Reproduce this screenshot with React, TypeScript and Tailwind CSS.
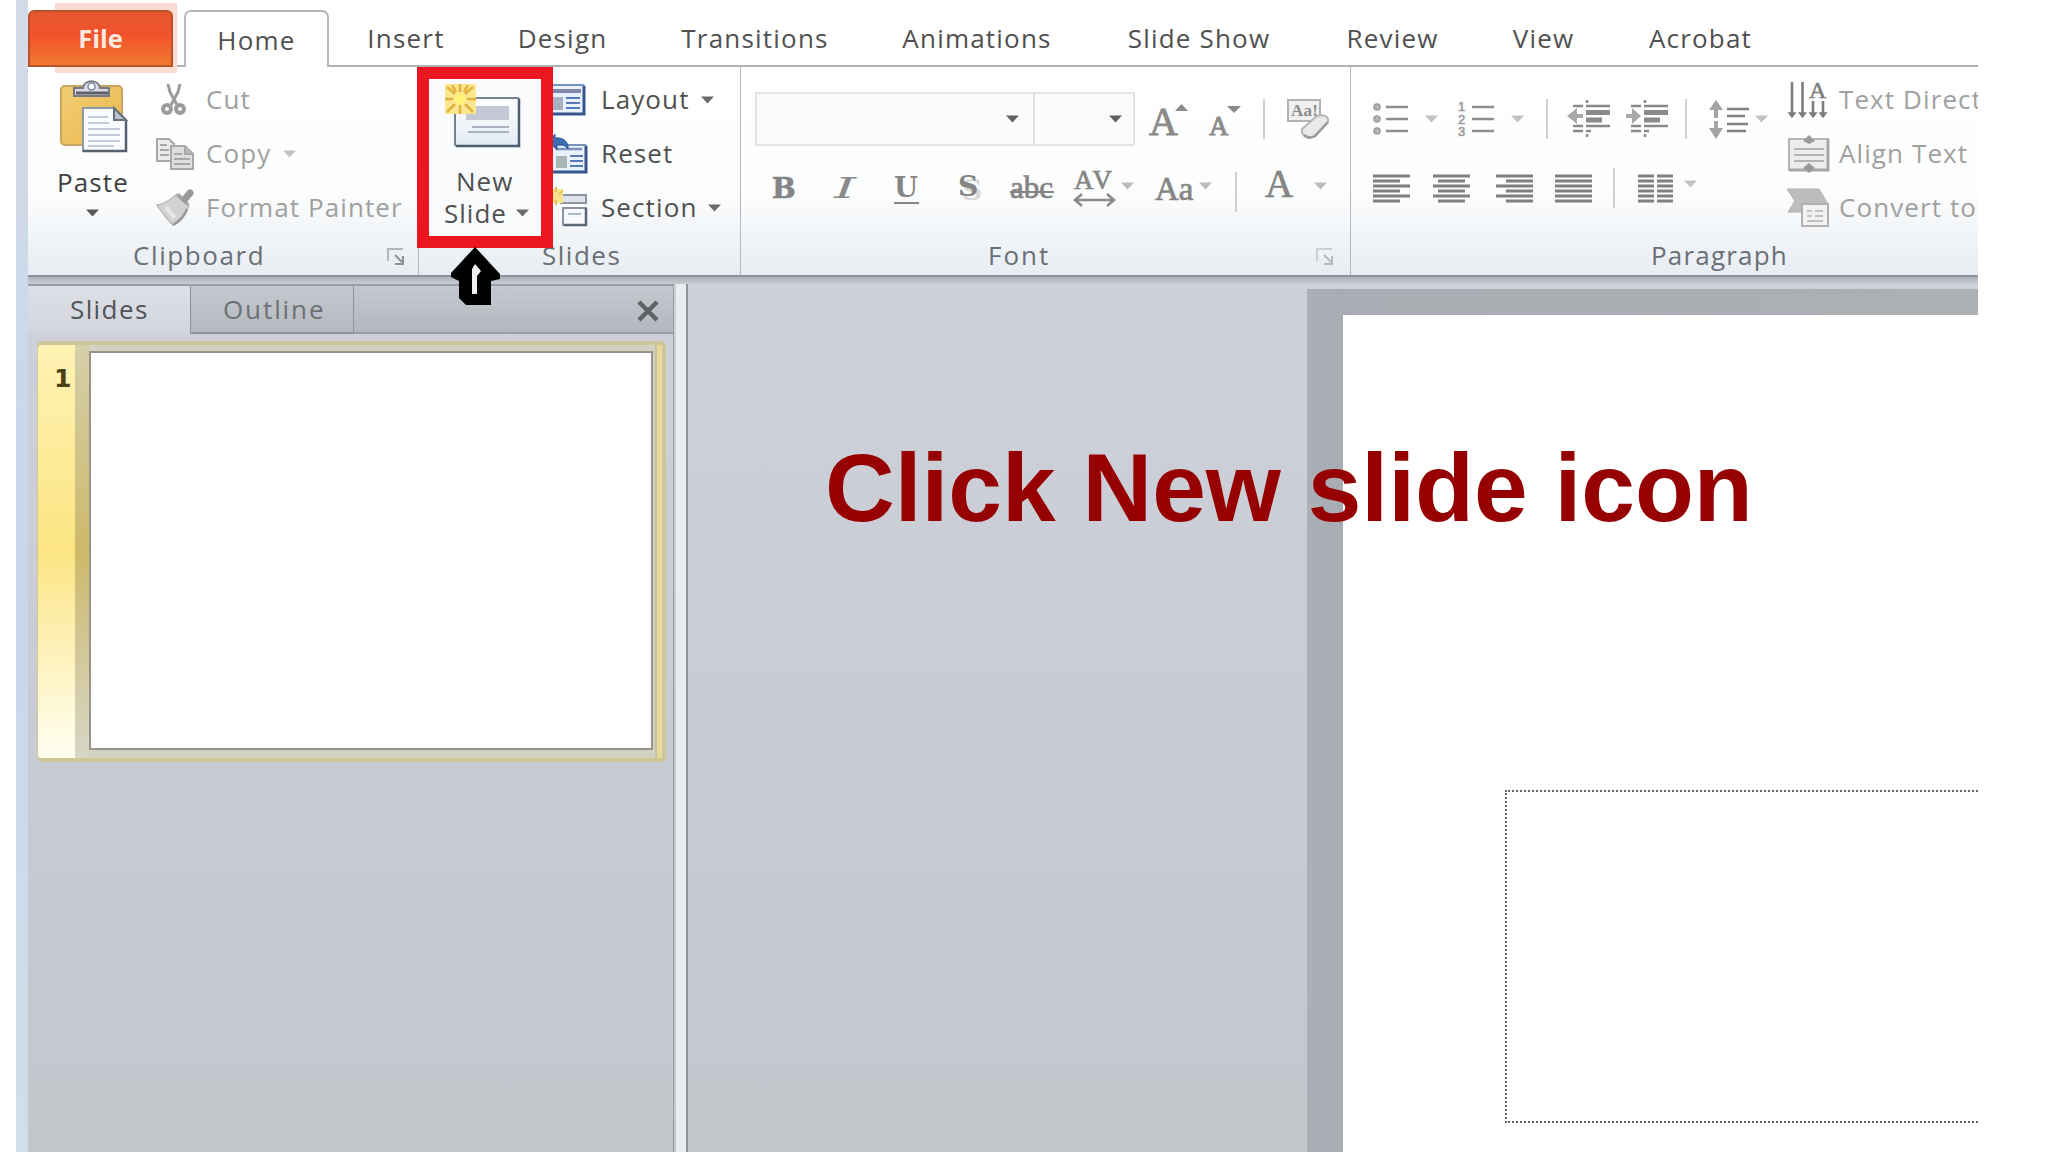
import type { ReactNode } from "react";

const tabs = [
    { name: "Insert", width: "w-[149px]" },
    { name: "Design", width: "w-[164px]" },
    { name: "Transitions", width: "w-[221px]" },
    { name: "Animations", width: "w-[223px]" },
    { name: "Slide Show", width: "w-[221px]" },
    { name: "Review", width: "w-[166px]" },
    { name: "View", width: "w-[136px]" },
    { name: "Acrobat", width: "w-[178px]" },
];

function Arrow({ className = "", color = "#6b6b6b" }: { className?: string; color?: string }) {
    return (
        <svg className={`shrink-0 ${className}`} width="13" height="8" viewBox="0 0 13 8">
            <path d="M0 0.5H13L6.5 7.5Z" fill={color} />
        </svg>
    );
}

function Launcher({ className = "", color = "#8b9096" }: { className?: string; color?: string }) {
    return (
        <svg className={className} width="20" height="18" viewBox="0 0 20 18" fill="none" stroke={color} strokeWidth="2">
            <path d="M2 13V1H17" strokeOpacity="0.6" />
            <path d="M9 7l7 7M17 8v8H9" />
        </svg>
    );
}

function Divider({ className = "" }: { className?: string }) {
    return <div className={`w-[2px] h-[40px] shrink-0 bg-[#cfd0d2] ${className}`} />;
}

function Group({ width, label, labelClass, launcher, children }: {
    width: string;
    label: string;
    labelClass: string;
    launcher?: ReactNode;
    children: ReactNode;
}) {
    return (
        <section className={`${width} h-full shrink-0 flex flex-col border-r border-[#b4b9c0]`}>
            <div className="h-[168px] shrink-0">{children}</div>
            <div className="flex-1 flex items-center">
                <span className={`text-[26px] leading-none text-[#6a6e75] whitespace-nowrap ${labelClass}`}>{label}</span>
                {launcher}
            </div>
        </section>
    );
}

function SmallButton({ icon, label, arrow, dim }: { icon: ReactNode; label: string; arrow?: ReactNode; dim?: boolean }) {
    return (
        <button className="h-[54px] flex items-center whitespace-nowrap">
            <span className="w-[52px] shrink-0 flex">{icon}</span>
            <span className={`text-[26px] leading-none pb-[3px] tracking-[1.1px] ${dim ? "text-[#a0a0a0]" : "text-[#505050]"}`}>{label}</span>
            {arrow}
        </button>
    );
}

function PasteIcon() {
    return (
        <svg width="70" height="76" viewBox="0 0 70 76">
            <defs>
                <linearGradient id="board" x1="0" y1="0" x2="1" y2="1">
                    <stop offset="0" stopColor="#f3cd73" />
                    <stop offset="1" stopColor="#e8b74e" />
                </linearGradient>
            </defs>
            <rect x="2" y="7" width="61" height="59" rx="4" fill="url(#board)" stroke="#c9a564" strokeWidth="2" />
            <path d="M15 17V9h9c1-9 16-9 17 0h9v8Z" fill="#d9dae6" stroke="#77797f" strokeWidth="2" />
            <circle cx="32.500" cy="7.500" r="3.500" fill="#fff" stroke="#8088a0" strokeWidth="1.500" />
            <path d="M17 14H49" stroke="#5e6068" strokeWidth="3" />
            <path d="M24 29H55L67 41V72H24Z" fill="#fbfcff" stroke="#8d99ab" strokeWidth="2" />
            <path d="M67 41V72H24" fill="none" stroke="#56616f" strokeWidth="2.500" />
            <path d="M55 29V41H67Z" fill="#b9c3cf" stroke="#66717c" strokeWidth="2" />
            <path d="M29 38H49M29 44H50M29 50H61M29 56H61M29 62H61M29 67H55" stroke="#c3c9dd" strokeWidth="2" />
        </svg>
    );
}

function CutIcon() {
    return (
        <svg className="ml-[6px]" width="28" height="38" viewBox="0 0 28 38" fill="none" stroke="#9b9b9b">
            <path d="M8 3l2 8 7 13M20 3l-2 8-7 13" strokeWidth="3" />
            <circle cx="7" cy="28" r="4" strokeWidth="4" />
            <circle cx="20" cy="28" r="4" strokeWidth="4" />
        </svg>
    );
}

function CopyIcon() {
    return (
        <svg width="42" height="36" viewBox="0 0 42 36" stroke="#a8a8a8" strokeWidth="2">
            <path d="M3 3H15L20 8V25H3Z" fill="#ececec" />
            <path d="M6 9h7M6 14h9M6 19h9" />
            <path d="M17 10H31L39 18V33H17Z" fill="#dedede" />
            <path d="M31 10V18H39" fill="#bbb" />
            <path d="M20 18h8M20 23h16M20 28h16" />
        </svg>
    );
}

function PainterIcon() {
    return (
        <svg width="44" height="38" viewBox="0 0 44 38">
            <path d="M3 16C13 15 18 9 23 5L35 16C33 23 27 31 19 36C13 31 8 23 3 16Z" fill="#d2d2d2" stroke="#b8b8b8" strokeWidth="1.500" />
            <path d="M22 7L33 17 35 14 25 4Z" fill="#a6a6a6" />
            <path d="M31 10l5-6" stroke="#999" strokeWidth="7" strokeLinecap="round" />
            <path d="M12 18l9 11" stroke="#e6e6e6" strokeWidth="4" />
            <path d="M19 36C26 32 31 26 33 20" fill="none" stroke="#999" strokeWidth="2.500" />
        </svg>
    );
}

function NewSlideIcon() {
    return (
        <svg width="78" height="66" viewBox="0 0 78 66">
            <defs>
                <linearGradient id="slide" x1="0" y1="0" x2="0" y2="1">
                    <stop offset="0" stopColor="#ffffff" />
                    <stop offset="1" stopColor="#e3ebf4" />
                </linearGradient>
            </defs>
            <rect x="11" y="15" width="64" height="48" rx="2" fill="url(#slide)" stroke="#77828f" strokeWidth="2" />
            <path d="M75 16V63H12" fill="none" stroke="#4e5e72" strokeWidth="2.500" />
            <rect x="22" y="23" width="43" height="14" fill="#c5c6d6" />
            <path d="M28 44H65M24 49H65" stroke="#a9b2bf" strokeWidth="2" />
            <rect x="1" y="1" width="31" height="30" fill="#fbe78f" />
            <path d="M16 1V9M16 22V31M1 16H9M23 16H32M3 4L11 11M29 4L21 11M3 29L11 21M29 29L21 21M8 2l4 7M24 2l-4 7" stroke="#e2b23f" strokeWidth="2.500" />
            <circle cx="16" cy="16" r="6" fill="#fff27a" />
        </svg>
    );
}

function LayoutIcon() {
    return (
        <svg width="40" height="34" viewBox="0 0 40 34">
            <rect x="-2" y="2" width="37" height="29" rx="1" fill="#e9f1fd" stroke="#7895bd" strokeWidth="2" />
            <path d="M35 3V31H0" fill="none" stroke="#36558d" strokeWidth="3" />
            <rect x="1" y="6" width="31" height="4" fill="#8089ab" />
            <rect x="1" y="14" width="13" height="13" fill="#a9b0c1" />
            <path d="M17 15H31M17 20H31M17 25H31" stroke="#5679ba" strokeWidth="2.200" />
        </svg>
    );
}

function ResetIcon() {
    return (
        <svg width="40" height="42" viewBox="0 0 40 42">
            <rect x="3" y="12" width="34" height="27" rx="1" fill="#e9f1fd" stroke="#7895bd" strokeWidth="2" />
            <path d="M37 13V39H3" fill="none" stroke="#36558d" strokeWidth="3" />
            <path d="M7 16H33" stroke="#7f93b8" strokeWidth="2.500" />
            <rect x="7" y="23" width="11" height="12" fill="#a9b8b4" />
            <path d="M21 23H34M21 28H34M21 33H34" stroke="#5679ba" strokeWidth="2.200" />
            <path d="M0 9L6 1V5C14 4 20 9 19 16C15 11 11 11 8 12V17Z" fill="#3c6eb4" stroke="#2e5ba0" />
        </svg>
    );
}

function SectionIcon() {
    return (
        <svg width="40" height="42" viewBox="0 0 40 42">
            <rect x="12" y="8" width="25" height="8" fill="#dfe3ec" stroke="#8e96a2" strokeWidth="2" />
            <rect x="14" y="21" width="23" height="17" fill="#f7f9fc" stroke="#8e8fa8" strokeWidth="2" />
            <path d="M37 21V38H15" fill="none" stroke="#5b6777" strokeWidth="2.500" />
            <path d="M19 27H32" stroke="#a9bcc9" strokeWidth="2" />
            <rect x="0" y="2" width="14" height="14" fill="#fae38c" />
            <path d="M7 0v5M7 13v5M0 4l4 3M14 4l-4 3M0 15l4-3" stroke="#edbf55" strokeWidth="2" />
        </svg>
    );
}

function CaretLetter({ up }: { up?: boolean }) {
    return (
        <svg className="overflow-visible" width="40" height="53" viewBox="0 0 40 53" fill="#8a8a8a" fontFamily="Liberation Serif, serif">
            {up
                ? <><text x="0" y="42" fontSize="40" stroke="#8a8a8a" strokeWidth="0.900">A</text><path d="M26 18H39L32.500 11Z" /></>
                : <><text x="0" y="42" fontSize="27" stroke="#8a8a8a" strokeWidth="0.900">A</text><path d="M18 13H32L25 20Z" /></>}
        </svg>
    );
}

function ClearFormatIcon() {
    return (
        <svg className="overflow-visible" width="44" height="42" viewBox="0 0 44 42">
            <rect x="2" y="2" width="32" height="21" fill="#f0f0f0" stroke="#b2b2b2" strokeWidth="2" />
            <text x="5" y="18" fontSize="17" fontFamily="Liberation Serif, serif" fill="#8c8c8c" textLength="27" fontWeight="bold">Aa!</text>
            <path d="M16 31L31 18C37 16 43 18 42 24L29 38C22 42 15 38 16 31Z" fill="#e9e9e9" stroke="#b5b5b5" strokeWidth="2" />
            <path d="M42 24L29 38C25 40 21 40 18 37" fill="none" stroke="#999" strokeWidth="2.500" />
        </svg>
    );
}

function Glyph({ children, width, size, y = 34, bold, family = "Liberation Serif, serif", length, extra }: {
    children: string;
    width: number;
    size: number;
    y?: number;
    bold?: boolean;
    family?: string;
    length?: number;
    extra?: ReactNode;
}) {
    return (
        <svg className="shrink-0 overflow-visible" width={width} height="56" viewBox={`0 0 ${width} 56`} fill="#858585">
            <text x="0" y={y} fontSize={size} fontFamily={family} fontWeight={bold ? "bold" : "normal"}
                stroke="#858585" strokeWidth="0.700" textLength={length}>{children}</text>
            {extra}
        </svg>
    );
}

function ListIcon({ numbered }: { numbered?: boolean }) {
    return (
        <svg className="overflow-visible" width="40" height="36" viewBox="0 0 40 36" stroke="#8f8f8f" strokeWidth="2.600">
            {numbered
                ? <g fontFamily="Liberation Sans, sans-serif" fontSize="13" fill="#9c9c9c" stroke="#9c9c9c" strokeWidth="0.600">
                    <text x="-1" y="10">1</text><text x="-1" y="23">2</text><text x="-1" y="35">3</text>
                </g>
                : <g fill="#b5b5b5" stroke="#9a9a9a" strokeWidth="1.500">
                    <circle cx="4" cy="6" r="3" /><circle cx="4" cy="18" r="3" /><circle cx="4" cy="30" r="3" />
                </g>}
            <path d="M13 6H35M13 18H35M13 30H35" />
        </svg>
    );
}

function IndentIcon({ right }: { right?: boolean }) {
    return (
        <svg width="44" height="38" viewBox="0 0 44 38" stroke="#8a8a8a" strokeWidth="2.400">
            <path d="M6 6H16M19 6H43M6 26H16M19 26H43M6 31H16M19 31H24" />
            <path d="M19 12.500H43M19 20H35" strokeWidth="5" />
            <path d="M20 0V3M20 34V37" strokeWidth="2.500" />
            <path d={right ? "M16 16L7 8V14H1V18H7V24Z" : "M0 16L10 8V14H16V18H10V24Z"} fill="#a8a8a8" stroke="none" />
        </svg>
    );
}

function LineSpacingIcon() {
    return (
        <svg width="41" height="40" viewBox="0 0 41 40">
            <path d="M7 1L14 11H9V19H5V11H0ZM7 40L14 29H9V22H5V29H0Z" fill="#a4a4a4" />
            <path d="M18 10H40M18 17H36M18 25H39M18 32H37" stroke="#7f7f7f" strokeWidth="2.400" />
        </svg>
    );
}

function LinesIcon({ d, width = 38 }: { d: string; width?: number }) {
    return (
        <svg className="shrink-0" width={width} height="30" viewBox={`0 0 ${width} 30`} stroke="#7f7f7f" strokeWidth="2.800">
            <path d={d} />
        </svg>
    );
}

function TextDirectionIcon() {
    return (
        <svg className="overflow-visible" width="42" height="38" viewBox="0 0 42 38" stroke="#7c7c7c" strokeWidth="2.600" fill="#7c7c7c">
            <path d="M5 1V34M15.500 1V34M26 20V34M36 20V34" fill="none" />
            <path d="M2 32H8L5 36ZM12.500 32H18.500L15.500 36ZM23 32H29L26 36ZM33 32H39L36 36Z" strokeWidth="1.500" />
            <text x="22" y="17" fontSize="24" fontFamily="Liberation Serif, serif" stroke="#7c7c7c" strokeWidth="0.500">A</text>
        </svg>
    );
}

function AlignTextIcon() {
    return (
        <svg width="44" height="38" viewBox="0 0 44 38">
            <rect x="2" y="4" width="39" height="31" fill="#ececec" stroke="#b5b5b5" strokeWidth="2" />
            <path d="M41 4V35H2" fill="none" stroke="#a6a6a6" strokeWidth="3" />
            <path d="M7 14H37M7 20H37M7 26H37" stroke="#b4b4b4" strokeWidth="2" />
            <path d="M16 6L22 0L28 6L22 9ZM16 33L22 28L28 33L22 38Z" fill="#999" />
        </svg>
    );
}

function ConvertIcon() {
    return (
        <svg width="44" height="42" viewBox="0 0 44 42">
            <path d="M0 2H32L41 17L30 25H1L8 14Z" fill="#bdbdbd" stroke="#b0b0b0" />
            <rect x="15" y="17" width="26" height="22" fill="#f2f2f2" stroke="#b1b1b1" strokeWidth="2" />
            <path d="M20 24H25M28 24H36M20 29H25M28 29H36M20 34H36" stroke="#c3c3c3" strokeWidth="2" />
        </svg>
    );
}

function TabStrip() {
    return (
        <nav className="h-[67px] shrink-0 relative flex items-end text-[26px] leading-none text-[#505050] tracking-[1.2px]">
            <div className="absolute left-[27px] top-[3px] w-[122px] h-[70px] bg-[#fbdcd2]" />
            <div className="relative w-[145px] h-[57px] shrink-0 flex items-center justify-center rounded-t-[6px] border-2 border-[#b9512c] bg-linear-to-b from-[#e5572f] via-[#f2512c] via-45% to-[#f0792d] font-bold text-[#ffe9df] tracking-[0px] text-[25.500px]">
                File
            </div>
            <div className="w-[11px] h-[57px] border-b-2 border-[#aeb1b5]" />
            <div className="w-[145px] h-[57px] shrink-0 flex items-center justify-center border-2 border-b-0 border-[#b4b7ba] rounded-t-[7px] bg-white">
                Home
            </div>
            <div className="flex-1 h-[57px] flex border-b-2 border-[#aeb1b5]">
                {tabs.map((tab) => (
                    <div key={tab.name} className={`${tab.width} h-full shrink-0 flex items-center justify-center whitespace-nowrap pt-px pl-[5px]`}>
                        {tab.name}
                    </div>
                ))}
            </div>
        </nav>
    );
}

function ClipboardGroup() {
    return (
        <Group width="w-[391px]" label="Clipboard" labelClass="ml-[105px] tracking-[1.6px]" launcher={<Launcher className="ml-auto mr-[12px] mt-[4px]" />}>
            <div className="flex pt-[6px]">
                <button className="w-[126px] shrink-0 flex flex-col items-start pt-[6px]">
                    <span className="ml-[31px]"><PasteIcon /></span>
                    <span className="ml-[29px] mt-[14px] text-[26px] leading-none tracking-[1.1px] text-[#404040]">Paste</span>
                    <Arrow className="ml-[58px] mt-[14px]" color="#5a5a5a" />
                </button>
                <div className="flex flex-col items-start">
                    <SmallButton icon={<CutIcon />} label="Cut" dim />
                    <SmallButton icon={<CopyIcon />} label="Copy" dim arrow={<Arrow className="ml-[12px]" color="#c4c4c4" />} />
                    <SmallButton icon={<PainterIcon />} label="Format Painter" dim />
                </div>
            </div>
        </Group>
    );
}

function SlidesGroup() {
    return (
        <Group width="w-[322px]" label="Slides" labelClass="ml-[123px] tracking-[1.5px]">
            <div className="h-full flex">
                <button className="relative z-10 -ml-[2px] mr-[-4px] w-[136px] h-[181px] shrink-0 flex flex-col items-start border-[12px] border-[#ec1620] bg-[#fafbfd] pt-[4px] text-[26px] leading-[32px] tracking-[1px] text-[#505050]">
                    <span className="ml-[15px]"><NewSlideIcon /></span>
                    <span className="ml-[27px] mt-[16px]">New</span>
                    <span className="ml-[15px] flex items-center">Slide<Arrow className="ml-[9px]" /></span>
                </button>
                <div className="flex flex-col items-start pt-[6px]">
                    <SmallButton icon={<LayoutIcon />} label="Layout" arrow={<Arrow className="ml-[11px]" />} />
                    <SmallButton icon={<ResetIcon />} label="Reset" />
                    <SmallButton icon={<SectionIcon />} label="Section" arrow={<Arrow className="ml-[11px]" />} />
                </div>
            </div>
        </Group>
    );
}

function FontGroup() {
    return (
        <Group width="w-[610px]" label="Font" labelClass="ml-[247px] tracking-[2px]" launcher={<Launcher className="ml-auto mr-[15px] mt-[4px]" color="#b4b9be" />}>
            <div className="pt-[25px] flex items-center">
                <div className="ml-[14px] w-[380px] h-[54px] shrink-0 flex border-2 border-[#e4e4e4] bg-[#fbfbfb]">
                    <div className="w-[278px] flex items-center justify-end border-r-2 border-[#e0e0e0] pr-[14px]"><Arrow color="#606060" /></div>
                    <div className="flex-1 flex items-center justify-end pr-[11px]"><Arrow color="#606060" /></div>
                </div>
                <span className="ml-[14px]"><CaretLetter up /></span>
                <span className="ml-[20px]"><CaretLetter /></span>
                <Divider className="ml-[14px]" />
                <span className="ml-[21px]"><ClearFormatIcon /></span>
            </div>
            <div className="mt-[18px] h-[56px] flex items-center">
                <div className="w-[31px] shrink-0" />
                <Glyph width={60} size={28} bold family="DejaVu Serif, serif">B</Glyph>
                <svg className="shrink-0 overflow-visible" width="62" height="56" viewBox="0 0 62 56">
                    <text x="2" y="34" fontSize="28" fontStyle="italic" fontFamily="DejaVu Serif, serif" fill="#8a8a8a" textLength="22" lengthAdjust="spacingAndGlyphs">I</text>
                </svg>
                <svg className="shrink-0 overflow-visible" width="63" height="56" viewBox="0 0 63 56">
                    <text x="0" y="33" fontSize="28" fontWeight="bold" fontFamily="DejaVu Serif, serif" fill="#858585" textLength="24" lengthAdjust="spacingAndGlyphs">U</text>
                    <path d="M0 39H25" stroke="#858585" strokeWidth="2" />
                </svg>
                <svg className="shrink-0 overflow-visible" width="53" height="56" viewBox="0 0 53 56" fontFamily="DejaVu Serif, serif" fontWeight="bold" fontSize="28">
                    <text x="5" y="36" fill="#d9d9d9">S</text>
                    <text x="1" y="32" fill="#858585">S</text>
                </svg>
                <Glyph width={64} size={31} length={43} extra={<path d="M0 28H44" stroke="#858585" strokeWidth="2" />}>abc</Glyph>
                <Glyph width={47} size={27} y={25} length={38} extra={<path d="M1 36H40M8 30L1 36L8 42M33 30L40 36L33 42" fill="none" stroke="#8a8a8a" strokeWidth="2.500" />}>AV</Glyph>
                <Arrow color="#bdbdbd" className="mb-[12px]" />
                <div className="w-[21px] shrink-0" />
                <Glyph width={44} size={33} y={36}>Aa</Glyph>
                <Arrow color="#bdbdbd" className="mb-[12px]" />
                <Divider className="ml-[23px]" />
                <div className="w-[28px] shrink-0" />
                <Glyph width={49} size={39} y={33}>A</Glyph>
                <Arrow color="#bdbdbd" className="mb-[12px]" />
            </div>
        </Group>
    );
}

function ParagraphGroup() {
    return (
        <Group width="w-[860px]" label="Paragraph" labelClass="ml-[300px] tracking-[1.2px]">
            <div className="flex">
                <div className="w-[436px] shrink-0">
                    <div className="pt-[25px] flex items-center h-[78px]">
                        <span className="ml-[22px]"><ListIcon /></span>
                        <Arrow color="#c2c2c2" className="ml-[12px]" />
                        <span className="ml-[21px]"><ListIcon numbered /></span>
                        <Arrow color="#c2c2c2" className="ml-[12px]" />
                        <Divider className="ml-[22px]" />
                        <span className="ml-[19px]"><IndentIcon /></span>
                        <span className="ml-[14px]"><IndentIcon right /></span>
                        <Divider className="ml-[16px]" />
                        <span className="ml-[22px]"><LineSpacingIcon /></span>
                        <Arrow color="#c2c2c2" className="ml-[5px]" />
                    </div>
                    <div className="mt-[15px] h-[56px] flex items-center">
                        <div className="w-[22px] shrink-0" />
                        <LinesIcon d="M0 3H37M0 8H27M0 13H37M0 18H27M0 23H37M0 28H27" />
                        <div className="w-[22px] shrink-0" />
                        <LinesIcon d="M0 3H37M5 8H32M0 13H37M5 18H32M0 23H37M5 28H32" />
                        <div className="w-[25px] shrink-0" />
                        <LinesIcon d="M0 3H37M10 8H37M0 13H37M10 18H37M0 23H37M10 28H37" />
                        <div className="w-[21px] shrink-0" />
                        <LinesIcon d="M0 3H37M0 8H37M0 13H37M0 18H37M0 23H37M0 28H37" />
                        <Divider className="ml-[20px]" />
                        <div className="w-[23px] shrink-0" />
                        <LinesIcon width={36} d="M0 3H16M19 3H35M0 8H16M19 8H35M0 13H16M19 13H35M0 18H16M19 18H35M0 23H16M19 23H35M0 28H16M19 28H35" />
                        <Arrow color="#c2c2c2" className="ml-[10px] mb-[8px]" />
                    </div>
                </div>
                <div className="flex flex-col items-start pt-[6px]">
                    <SmallButton icon={<TextDirectionIcon />} label="Text Direct" dim />
                    <SmallButton icon={<AlignTextIcon />} label="Align Text" dim />
                    <SmallButton icon={<ConvertIcon />} label="Convert to" dim />
                </div>
            </div>
        </Group>
    );
}

function SlidesPane() {
    return (
        <aside className="w-[646px] shrink-0 flex flex-col border-r border-[#979ba1]">
            <div className="h-[50px] shrink-0 flex border-t-2 border-[#9a9fa6] text-[26px] leading-none">
                <div className="w-[162px] flex items-center pb-[2px] pl-[42px] tracking-[1.4px] text-[#515459] bg-linear-to-b from-[#dde0e6] to-[#d2d5dc]">Slides</div>
                <div className="w-[164px] flex items-center pl-[32px] tracking-[1.9px] text-[#6d7176] border-x border-b-2 border-[#8f949b] bg-linear-to-b from-[#c5c9cf] to-[#b4b8bf]">Outline</div>
                <div className="flex-1 flex items-center justify-end pr-[13px] border-b-2 border-[#999ea5] bg-linear-to-b from-[#c5c9cf] to-[#b2b6be]">
                    <svg className="mt-[4px]" width="24" height="22" viewBox="0 0 24 22">
                        <path d="M3 2L21 20M21 2L3 20" stroke="#5d6064" strokeWidth="4.500" />
                    </svg>
                </div>
            </div>
            <div className="ml-[9px] mt-[7px] w-[629px] h-[421px] shrink-0 flex border-[4px] border-l border-[#cfc797] rounded-[5px] bg-[#d3d1c1]">
                <div className="w-[37px] shrink-0 rounded-l-[4px] bg-linear-to-b from-[#fff3b4] via-[#fce481] via-50% to-[#fffef0] pl-[16px] pt-[20px] font-['DejaVu_Sans'] font-bold text-[25px] leading-[28px] text-[#4a4018]">1</div>
                <div className="w-[14px] shrink-0 bg-linear-to-b from-[#d5cfa9] via-[#cdb969] to-[#d8d6c6]" />
                <div className="mt-[6px] w-[564px] h-[399px] shrink-0 border-2 border-[#97958a] bg-white" />
                <div className="flex-1 ml-[2px] border-l-2 border-[#c8c3a0] bg-[#e6d99d]" />
            </div>
        </aside>
    );
}

export default function App() {
    return (
        <div className="relative w-[2048px] h-[1152px] overflow-hidden bg-white pl-[16px] font-['Open_Sans','Noto_Sans',sans-serif]">
            <div className="w-[1962px] h-full flex overflow-hidden">
                <div className="w-[12px] shrink-0 bg-linear-to-b from-[#d3dbe6] via-[#c8d6ec] to-[#d2dfe8]" />
                <div className="w-[1950px] shrink-0 flex flex-col overflow-hidden">
                    <TabStrip />
                    <div className="h-[208px] shrink-0 flex bg-linear-to-b from-white via-[#fcfdfd] via-60% to-[#e8edf3]">
                        <ClipboardGroup />
                        <SlidesGroup />
                        <FontGroup />
                        <ParagraphGroup />
                    </div>
                    <div className="h-[9px] shrink-0 border-t-2 border-[#8e939a] bg-linear-to-b from-[#aeb2b8] to-[#c8ccd3]" />
                    <div className="flex-1 min-h-0 flex bg-linear-to-b from-[#ced1d9] via-[#c7cad3] via-65% to-[#c3c6cb]">
                        <SlidesPane />
                        <div className="w-[15px] shrink-0 flex pl-[2px]">
                            <div className="w-[10px] bg-[#e9edf2]" />
                            <div className="w-[2px] bg-[#8f949a]" />
                        </div>
                        <div className="w-[618px] shrink-0" />
                        <div className="flex-1 mt-[5px] pt-[26px] pl-[36px] bg-linear-to-r from-[#abafb6] via-[#a9adb3] via-4% to-[#adb0b5]">
                            <div className="h-full bg-white pl-[162px] pt-[475px]">
                                <div className="h-[333px] w-[600px] border-2 border-dotted border-[#666]" />
                            </div>
                        </div>
                    </div>
                </div>
            </div>

            {/* pointer under the New Slide button */}
            <svg className="absolute left-[450px] top-[247px] z-20" width="52" height="60" viewBox="0 0 52 60">
                <path d="M25 0L50 27V32L41 34V58H16L9 51V34L1 30V26Z" fill="#000" />
                <path d="M25 17L31 24L27 29V47H22V22Z" fill="#efefef" />
            </svg>

            <h1 className="absolute left-[825px] top-[432px] whitespace-nowrap font-['Liberation_Sans'] font-bold text-[96.500px] leading-[112px] text-[#960000]">
                Click New slide icon
            </h1>
        </div>
    );
}
